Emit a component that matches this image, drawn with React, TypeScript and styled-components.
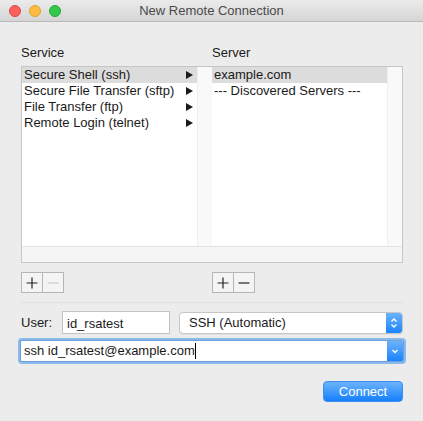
import React from 'react';
import styled, { createGlobalStyle } from 'styled-components';

const GlobalStyle = createGlobalStyle`
  html, body {
    margin: 0;
    padding: 0;
    background: #ececec;
  }
  body {
    font-family: "Liberation Sans", Arial, sans-serif;
    font-size: 13px;
    color: #1a1a1a;
  }
`;

const Window = styled.div`
  width: 423px;
  height: 421px;
  background: #ececec;
  display: flex;
  flex-direction: column;
  overflow: hidden;
`;

const TitleBar = styled.div`
  height: 21px;
  border-bottom: 1px solid #b9b9b9;
  background: linear-gradient(#ebebeb, #d5d5d5);
  display: flex;
  align-items: center;
  position: relative;
`;

const Lights = styled.div`
  display: flex;
  gap: 8px;
  padding-left: 9px;
`;

const Light = styled.span<{ $c: string; $b: string }>`
  width: 12px;
  height: 12px;
  border-radius: 50%;
  background: ${p => p.$c};
  box-sizing: border-box;
  border: 0.5px solid ${p => p.$b};
`;

const Title = styled.div`
  position: absolute;
  left: 0;
  right: 0;
  text-align: center;
  color: #4a4a4a;
  font-size: 13px;
  pointer-events: none;
`;

const Content = styled.div`
  padding: 23px 20px 0 21px;
  display: flex;
  flex-direction: column;
`;

const Labels = styled.div`
  display: grid;
  grid-template-columns: 191px 1fr;
  height: 16px;
  line-height: 16px;
`;

const Browser = styled.div`
  margin-top: 5px;
  height: 195px;
  border: 1px solid #c6c6c6;
  background: #f5f5f5;
  display: flex;
  flex-direction: column;
`;

const Columns = styled.div`
  display: grid;
  grid-template-columns: 190px 190px;
  height: 179px;
  border-bottom: 1px solid #e3e3e3;
`;

const Column = styled.div`
  display: flex;
  background: #fff;
`;

const List = styled.div`
  flex: 1;
  display: flex;
  flex-direction: column;
`;

const Gutter = styled.div`
  width: 14px;
  background: #f9f9f9;
  border-left: 1px solid #eeeeee;
`;

const Row = styled.div<{ $sel?: boolean }>`
  height: 16px;
  line-height: 16px;
  padding-left: 2px;
  padding-right: 4px;
  display: flex;
  align-items: center;
  justify-content: space-between;
  white-space: nowrap;
  background: ${p => (p.$sel ? '#dcdcdc' : 'transparent')};
  color: #1a1a1a;
`;

const Arrow = styled.span`
  width: 0;
  height: 0;
  border-top: 4px solid transparent;
  border-bottom: 4px solid transparent;
  border-left: 7px solid #1a1a1a;
`;

const ButtonRow = styled.div`
  display: grid;
  grid-template-columns: 191px 1fr;
  margin-top: 9px;
`;

const Segmented = styled.div`
  display: flex;
`;

const SegButton = styled.div<{ $disabled?: boolean }>`
  width: 20px;
  height: 19px;
  border: 1px solid #b6b6b6;
  background: #f4f4f4;
  display: flex;
  align-items: center;
  justify-content: center;
  & + & {
    border-left: none;
  }
  svg {
    stroke: ${p => (p.$disabled ? '#c9c9c9' : '#222')};
  }
`;

const Separator = styled.div`
  margin-top: 9px;
  height: 1px;
  background: #e0e0e0;
`;

const UserRow = styled.div`
  margin-top: 8px;
  display: flex;
  align-items: center;
`;

const Label = styled.span`
  width: 41px;
  color: #1a1a1a;
`;

const TextField = styled.div`
  width: 102px;
  height: 21px;
  border: 1px solid #c2c2c2;
  background: #fff;
  box-sizing: content-box;
  padding-left: 4px;
  line-height: 23px;
  margin-right: 9px;
`;

const Popup = styled.div`
  flex: 1;
  height: 20px;
  border: 1px solid #c6c6c6;
  border-radius: 4px;
  background: #fff;
  display: flex;
  overflow: hidden;
  box-shadow: 0 1px 0 rgba(0, 0, 0, 0.05);
`;

const PopupText = styled.span`
  flex: 1;
  padding-left: 9px;
  line-height: 20px;
`;

const BlueTab = styled.div`
  width: 16px;
  background: linear-gradient(#6cb3fa, #1a84fd);
  display: flex;
  align-items: center;
  justify-content: center;
`;

const ComboRing = styled.div`
  margin: 4px -3px 0 -3px;
  padding: 2px;
  border-radius: 4px;
  background: #8cb9ec;
  display: flex;
`;

const Combo = styled.div`
  flex: 1;
  height: 20px;
  border: 1px solid #6d9fd9;
  border-radius: 2px;
  background: #fff;
  display: flex;
  overflow: hidden;
`;

const ComboText = styled.span`
  flex: 1;
  padding-left: 3px;
  line-height: 22px;
  display: flex;
  align-items: center;
`;

const Caret = styled.span`
  display: inline-block;
  width: 1px;
  height: 16px;
  background: #000;
`;

const Footer = styled.div`
  margin-top: 17px;
  display: flex;
  justify-content: flex-end;
`;

const ConnectButton = styled.div`
  width: 80px;
  height: 21px;
  border-radius: 4px;
  background: linear-gradient(#6cb3fa, #1580fd);
  border: 1px solid #3d8ef2;
  box-sizing: border-box;
  color: #fff;
  font-size: 13px;
  line-height: 19px;
  text-align: center;
`;

const Plus = () => (
  <svg width="12" height="12" viewBox="0 0 12 12" fill="none" strokeWidth="1.2">
    <path d="M6 0.5v11M0.5 6h11" />
  </svg>
);

const Minus = () => (
  <svg width="12" height="12" viewBox="0 0 12 12" fill="none" strokeWidth="1.2">
    <path d="M0.5 6h11" />
  </svg>
);

const services = [
  'Secure Shell (ssh)',
  'Secure File Transfer (sftp)',
  'File Transfer (ftp)',
  'Remote Login (telnet)',
];

const App: React.FC = () => (
  <Window>
    <GlobalStyle />
    <TitleBar>
      <Lights>
        <Light $c="#fc605c" $b="#de4a45" />
        <Light $c="#fdbc40" $b="#dea236" />
        <Light $c="#34c84a" $b="#27aa35" />
      </Lights>
      <Title>New Remote Connection</Title>
    </TitleBar>
    <Content>
      <Labels>
        <span>Service</span>
        <span>Server</span>
      </Labels>
      <Browser>
        <Columns>
          <Column>
            <List>
              {services.map((s, i) => (
                <Row key={s} $sel={i === 0}>
                  {s}
                  <Arrow />
                </Row>
              ))}
            </List>
            <Gutter />
          </Column>
          <Column>
            <List>
              <Row $sel>example.com</Row>
              <Row>--- Discovered Servers ---</Row>
            </List>
            <Gutter />
          </Column>
        </Columns>
      </Browser>
      <ButtonRow>
        <Segmented>
          <SegButton><Plus /></SegButton>
          <SegButton $disabled><Minus /></SegButton>
        </Segmented>
        <Segmented>
          <SegButton><Plus /></SegButton>
          <SegButton><Minus /></SegButton>
        </Segmented>
      </ButtonRow>
      <Separator />
      <UserRow>
        <Label>User:</Label>
        <TextField>id_rsatest</TextField>
        <Popup>
          <PopupText>SSH (Automatic)</PopupText>
          <BlueTab>
            <svg width="8" height="12" viewBox="0 0 8 12" fill="none" stroke="#fff" strokeWidth="1.4">
              <path d="M1.5 4.5L4 2l2.5 2.5M1.5 7.5L4 10l2.5-2.5" />
            </svg>
          </BlueTab>
        </Popup>
      </UserRow>
      <ComboRing>
        <Combo>
          <ComboText>
            ssh id_rsatest@example.com<Caret />
          </ComboText>
          <BlueTab>
            <svg width="8" height="8" viewBox="0 0 8 8" fill="none" stroke="#fff" strokeWidth="1.4">
              <path d="M1.5 3L4 5.5 6.5 3" />
            </svg>
          </BlueTab>
        </Combo>
      </ComboRing>
      <Footer>
        <ConnectButton>Connect</ConnectButton>
      </Footer>
    </Content>
  </Window>
);

export default App;
